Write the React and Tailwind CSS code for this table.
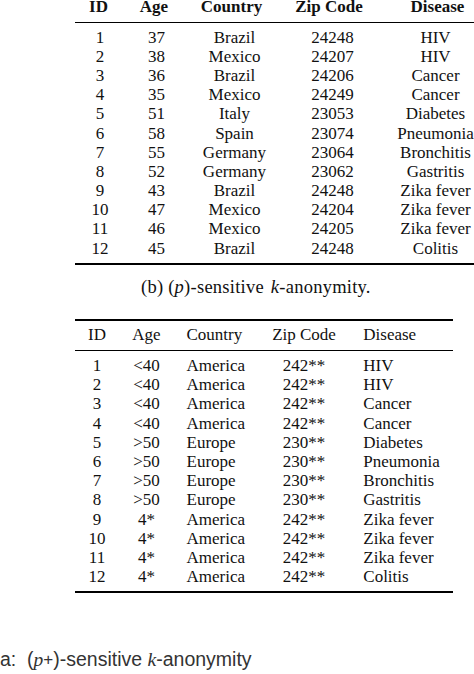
const original = [
  ["1", "37", "Brazil", "24248", "HIV"],
  ["2", "38", "Mexico", "24207", "HIV"],
  ["3", "36", "Brazil", "24206", "Cancer"],
  ["4", "35", "Mexico", "24249", "Cancer"],
  ["5", "51", "Italy", "23053", "Diabetes"],
  ["6", "58", "Spain", "23074", "Pneumonia"],
  ["7", "55", "Germany", "23064", "Bronchitis"],
  ["8", "52", "Germany", "23062", "Gastritis"],
  ["9", "43", "Brazil", "24248", "Zika fever"],
  ["10", "47", "Mexico", "24204", "Zika fever"],
  ["11", "46", "Mexico", "24205", "Zika fever"],
  ["12", "45", "Brazil", "24248", "Colitis"],
];

const generalized = [
  ["1", "<40", "America", "242**", "HIV"],
  ["2", "<40", "America", "242**", "HIV"],
  ["3", "<40", "America", "242**", "Cancer"],
  ["4", "<40", "America", "242**", "Cancer"],
  ["5", ">50", "Europe", "230**", "Diabetes"],
  ["6", ">50", "Europe", "230**", "Pneumonia"],
  ["7", ">50", "Europe", "230**", "Bronchitis"],
  ["8", ">50", "Europe", "230**", "Gastritis"],
  ["9", "4*", "America", "242**", "Zika fever"],
  ["10", "4*", "America", "242**", "Zika fever"],
  ["11", "4*", "America", "242**", "Zika fever"],
  ["12", "4*", "America", "242**", "Colitis"],
];

const headers = ["ID", "Age", "Country", "Zip Code", "Disease"];

function SensitiveTable() {
  return (
    <div className="ml-[75px] w-[430px] -mt-[3px]">
      <div className="grid grid-cols-[47px_64px_91px_104px_113px] h-[19.2px] text-center font-bold">
        {headers.map((h) => (
          <div key={h} className="whitespace-nowrap">{h}</div>
        ))}
      </div>
      <div className="mt-[5.8px] h-[1.3px] bg-black" />
      <div className="pt-[4.3px]">
        {original.map((row) => (
          <div key={row[0]} className="grid grid-cols-[50px_63px_93px_103px_103px] h-[19.2px] text-center">
            {row.map((c, i) => (
              <div key={i} className="whitespace-nowrap">{c}</div>
            ))}
          </div>
        ))}
      </div>
      <div className="mt-[5.6px] h-[2px] bg-black" />
    </div>
  );
}

function AnonTable() {
  return (
    <div className="ml-[75px] w-[378px]">
      <div className="h-[2px] bg-black" />
      <div className="mt-[4.3px]">
        <Row cells={headers} />
      </div>
      <div className="mt-[5.7px] h-px bg-black" />
      <div className="pt-[4.8px]">
        {generalized.map((row) => (
          <Row key={row[0]} cells={row} />
        ))}
      </div>
      <div className="mt-[4.6px] h-[2px] bg-black" />
    </div>
  );
}

function Row({ cells }) {
  return (
    <div className="grid grid-cols-[44px_55px_81px_98px_100px] h-[19.2px] whitespace-nowrap">
      <div className="text-center">{cells[0]}</div>
      <div className="text-center">{cells[1]}</div>
      <div className="pl-[12.5px]">{cells[2]}</div>
      <div className="text-center">{cells[3]}</div>
      <div className="pl-[10.3px]">{cells[4]}</div>
    </div>
  );
}

export default function App() {
  return (
    <div className="w-[474px] h-[674px] overflow-hidden bg-white text-[#111] font-[Liberation_Serif,Times_New_Roman,serif] text-[17px] leading-[19.2px]">
      <SensitiveTable />
      <div className="mt-[12px] pl-[141px] text-[18.5px] leading-[21px] whitespace-nowrap tracking-[0.25px]">
        (b) (<i>p</i>)-sensitive <i className="ml-[2px]">k</i>-anonymity.
      </div>
      <div className="mt-[20.7px]">
        <AnonTable />
      </div>
      <div className="mt-[54px] whitespace-nowrap font-[Liberation_Sans,Arial,sans-serif] text-[19.5px] leading-[24px] text-[#333]">
        a:&nbsp; (<i className="font-[Liberation_Serif,Times_New_Roman,serif]">p</i>
        <sup className="text-[17px] relative -top-[1px]">+</sup>)-sensitive{" "}
        <i className="font-[Liberation_Serif,Times_New_Roman,serif]">k</i>-anonymity
      </div>
    </div>
  );
}
